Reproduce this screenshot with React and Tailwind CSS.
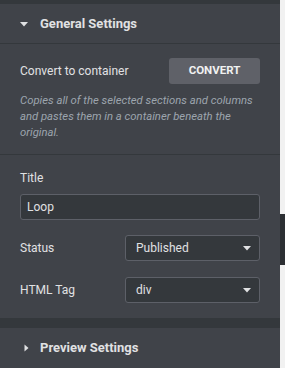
import React from 'react';

const CaretDown = () => (
  <svg width="8" height="8" viewBox="0 0 8 8">
    <path d="M0 2h8L4 6.5z" fill="currentColor" />
  </svg>
);

const CaretRight = () => (
  <svg width="5" height="8" viewBox="0 0 5 8">
    <path d="M0.5 0.5L4.5 4L0.5 7.5z" fill="currentColor" />
  </svg>
);

function SelectBox({ value }) {
  return (
    <div className="flex h-[26px] w-[135px] items-center justify-between rounded-[3px] border border-[#5d6068] bg-[#34383c] pl-[10px] pr-[8px] text-[12px] text-[#e0e1e3]">
      <span>{value}</span>
      <span className="text-[#e0e1e3]"><CaretDown /></span>
    </div>
  );
}

export default function App() {
  return (
    <div className="flex h-[368px] w-[285px] bg-[#f1f1f1] font-['Roboto',sans-serif]">
      <div className="flex w-[280px] flex-col bg-[#404349]">
        <div className="h-[4px] bg-[#34383c]" />

        {/* General Settings */}
        <div className="flex h-[40px] items-center gap-[12px] border-b border-[#34383c] pl-[20px] text-[#e0e1e3]">
          <CaretDown />
          <span className="text-[13px] font-bold">General Settings</span>
        </div>

        <div className="border-b border-[#34383c] px-[20px] pt-[14px] pb-[13px]">
          <div className="flex items-center justify-between">
            <span className="text-[12px] text-[#e0e1e3]">Convert to container</span>
            <button className="h-[26px] w-[91px] rounded-[3px] bg-[#5f6168] text-[11.5px] font-bold text-[#f1f1f1]">
              CONVERT
            </button>
          </div>
          <p className="mt-[9px] text-[11.3px] italic leading-[16px] text-[#9da5ae]">
            Copies all of the selected sections and columns and pastes them in a container beneath the original.
          </p>
        </div>

        <div className="px-[20px] pt-[13px]">
          <div className="text-[12px] leading-[20px] text-[#e0e1e3]">Title</div>
          <div className="mt-[6px] flex h-[26px] items-center rounded-[3px] border border-[#5d6068] bg-[#34383c] px-[6px] text-[12px] text-[#e0e1e3]">
            Loop
          </div>
          <div className="mt-[15px] flex items-center justify-between">
            <span className="text-[12px] text-[#e0e1e3]">Status</span>
            <SelectBox value="Published" />
          </div>
          <div className="mt-[16px] flex items-center justify-between">
            <span className="text-[12px] text-[#e0e1e3]">HTML Tag</span>
            <SelectBox value="div" />
          </div>
        </div>

        <div className="mt-[15px] h-[10px] bg-[#34383c]" />

        {/* Preview Settings */}
        <div className="flex h-[40px] items-center gap-[11px] pl-[24px] text-[#e0e1e3]">
          <CaretRight />
          <span className="text-[13px] font-bold">Preview Settings</span>
        </div>
      </div>
      <div className="flex flex-1 flex-col">
        <div className="h-[214px]" />
        <div className="h-[51px] bg-[#2c2f33]" />
      </div>
    </div>
  );
}
